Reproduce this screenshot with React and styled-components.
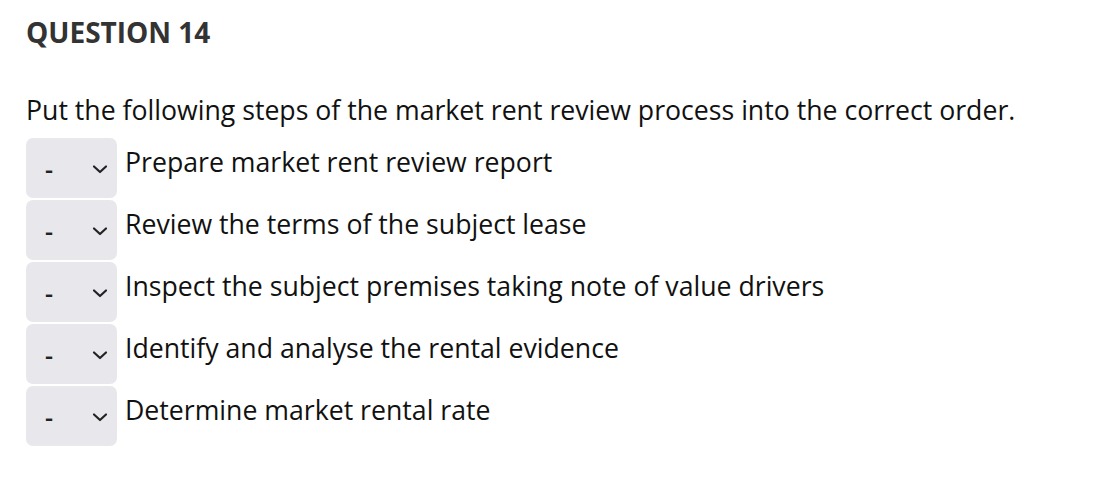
import * as React from 'react'
import styled, { createGlobalStyle } from 'styled-components'

const GlobalStyle = createGlobalStyle`
  body {
    margin: 0;
    background: #fff;
    font-family: 'Open Sans', 'Noto Sans', sans-serif;
    color: #111;
  }
`

const Page = styled.div`
  padding: 12px 26px;
`

const Heading = styled.h2`
  margin: 0;
  font-size: 28px;
  font-weight: 700;
  color: #333;
  line-height: 40px;
`

const Prompt = styled.p`
  margin: 40px 0 10px;
  font-size: 26.67px;
  line-height: 36px;
`

const List = styled.div`
  display: flex;
  flex-direction: column;
  gap: 2px;
`

const Row = styled.div`
  display: flex;
  align-items: flex-start;
  gap: 8px;
  height: 60px;
`

const Select = styled.div`
  width: 91px;
  height: 60px;
  box-sizing: border-box;
  border-radius: 7px;
  background: #e8e8ec;
  display: flex;
  align-items: center;
  padding: 1px 9px 0 19px;
  justify-content: space-between;
  flex-shrink: 0;
`

const Dash = styled.span`
  font-size: 25px;
  font-weight: 600;
  color: #222;
`

const Label = styled.span`
  font-size: 26.67px;
  line-height: 36px;
  padding-top: 6px;
`

function Chevron() {
  return (
    <svg width="16" height="10" viewBox="0 0 16 10" fill="none">
      <path d="M2 2.5l6 5.5 6-5.5" stroke="#222" strokeWidth="2.2" strokeLinecap="round" strokeLinejoin="round" />
    </svg>
  )
}

const steps = [
  'Prepare market rent review report',
  'Review the terms of the subject lease',
  'Inspect the subject premises taking note of value drivers',
  'Identify and analyse the rental evidence',
  'Determine market rental rate',
]

export default function App() {
  return (
    <>
      <GlobalStyle />
      <Page>
        <Heading>QUESTION 14</Heading>
        <Prompt>Put the following steps of the market rent review process into the correct order.</Prompt>
        <List>
          {steps.map((s) => (
            <Row key={s}>
              <Select>
                <Dash>-</Dash>
                <Chevron />
              </Select>
              <Label>{s}</Label>
            </Row>
          ))}
        </List>
      </Page>
    </>
  )
}
